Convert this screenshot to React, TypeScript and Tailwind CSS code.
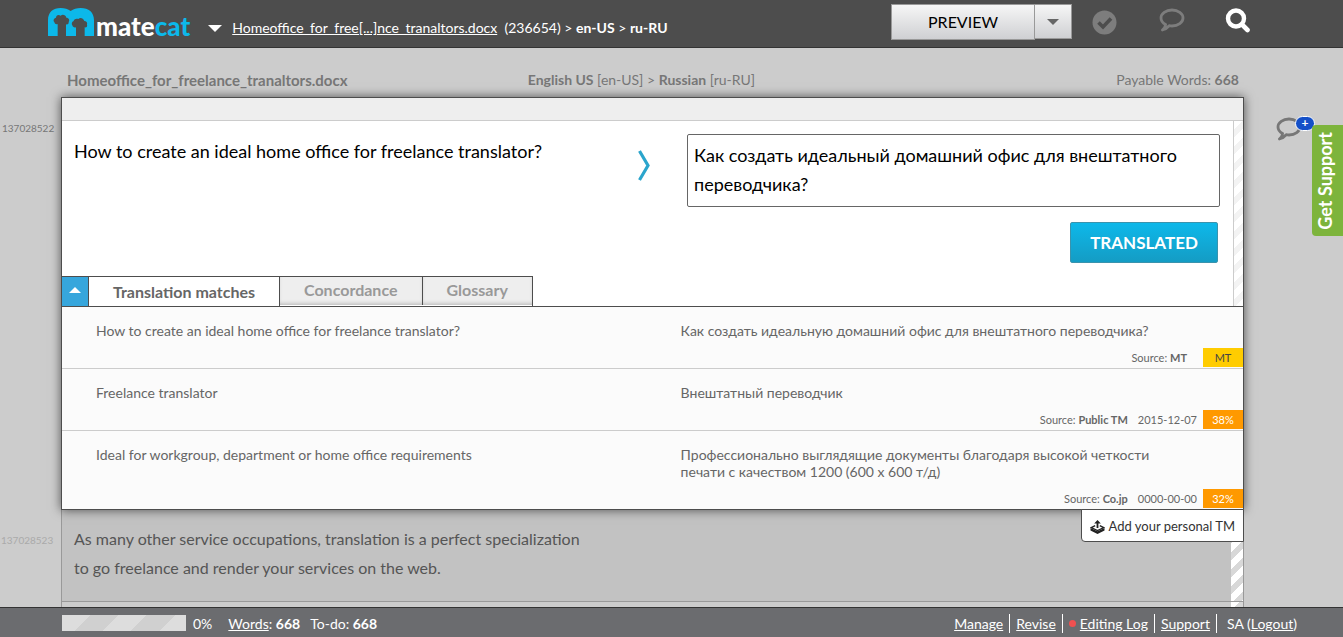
import React, { useState } from 'react'
import clsx from 'clsx'

interface Match {
  source: string
  target: string
  origin: string
  date?: string
  score: string
  machine?: boolean
}

const MATCHES: Match[] = [
  {
    source: 'How to create an ideal home office for freelance translator?',
    target: 'Как создать идеальную домашний офис для внештатного переводчика?',
    origin: 'MT',
    score: 'MT',
    machine: true,
  },
  {
    source: 'Freelance translator',
    target: 'Внештатный переводчик',
    origin: 'Public TM',
    date: '2015-12-07',
    score: '38%',
  },
  {
    source: 'Ideal for workgroup, department or home office requirements',
    target: 'Профессионально выглядящие документы благодаря высокой четкости печати с качеством 1200 (600 x 600 т/д)',
    origin: 'Co.jp',
    date: '0000-00-00',
    score: '32%',
  },
]

const TABS = ['Translation matches', 'Concordance', 'Glossary']

function Logo(): React.ReactElement {
  return (
    <a href="#" className="flex items-end gap-0.5">
      <svg width="46" height="28" viewBox="0 0 138 84" aria-hidden="true">
        <path
          fill="#0cb8ea"
          d="M0 84V36C0 13 15 0 38 0c12 0 22 3 30 9 8-6 18-9 30-9 24 0 40 13 40 36v48h-28V58c5 2 9-3 7-8 2-6-2-11-8-11-3-9-13-11-18-6-7-3-14 1-14 6-6 2-7 9-4 13 1 5 6 8 11 6v26H54V49c5 2 9-2 8-7 4-6 0-13-7-13-2-8-11-11-17-6-7-5-14-1-14 6-7 1-9 9-5 13 1 6 6 8 10 6v36z"
        />
      </svg>
      <span className="text-[26px] leading-5 font-black text-white">
        mate<span className="text-[#0cb8ea]">cat</span>
      </span>
    </a>
  )
}

function BubbleIcon({ className }: { className?: string }): React.ReactElement {
  return (
    <svg width="26" height="24" viewBox="0 0 26 24" fill="none" stroke="currentColor" strokeWidth="2.8" className={className} aria-hidden="true">
      <path d="M6.600 16.600C3.600 15 2 12.600 2 10 2 5.500 6.900 2 13 2s11 3.500 11 8-4.900 8-11 8c-1 0-1.900-.1-2.800-.3C8.500 19.600 6 21.500 3.400 22c1.800-1.500 3-3.400 3.200-5.400z" strokeLinejoin="round" />
    </svg>
  )
}

function Header(): React.ReactElement {
  return (
    <header className="h-12 shrink-0 bg-[#4d4d4d] border-b border-[#333] flex items-start pl-12 pr-[93px] text-white">
      <div className="flex items-start pt-2">
        <Logo />
        <button title="Projects" className="ml-[18px] mt-[17px] border-x-[7px] border-x-transparent border-t-[7px] border-t-white" />
        <div className="ml-2.5 mt-3 text-[14px] leading-4 whitespace-nowrap">
          <a href="#" className="underline">Homeoffice_for_free[...]nce_tranaltors.docx</a>
          <span>&nbsp; (236654) &gt; </span>
          <b>en-US</b> &gt; <b>ru-RU</b>
        </div>
      </div>
      <div className="ml-auto flex items-start pt-1">
        <button className="w-36 h-9 border border-[#999] bg-linear-to-b from-[#f6f6f6] to-[#cfd0d3] text-[16px] text-black">
          PREVIEW
        </button>
        <button title="More actions" className="w-[37px] h-[35px] border border-l-0 border-[#999] bg-linear-to-b from-[#f6f6f6] to-[#cfd0d3] flex items-center justify-center">
          <span className="border-x-[6px] border-x-transparent border-t-[6px] border-t-[#666]" />
        </button>
        <button title="Quality report" className="ml-5 mt-1.5">
          <svg width="25" height="25" viewBox="0 0 25 25" aria-hidden="true">
            <circle cx="12.500" cy="12.500" r="12" fill="#7d7d7d" />
            <path d="M6.500 12.500l4.500 4.500 8-8.500" fill="none" stroke="#4d4d4d" strokeWidth="3.600" />
          </svg>
        </button>
        <button title="Comments" className="ml-[42px] mt-1 text-[#7d7d7d]">
          <BubbleIcon />
        </button>
        <button title="Search" className="ml-10 mt-1">
          <svg width="25" height="25" viewBox="0 0 25 25" fill="none" stroke="white" aria-hidden="true">
            <circle cx="11" cy="10.500" r="8" strokeWidth="4.400" />
            <path d="M17 16.500l5.500 5.500" strokeWidth="4.600" strokeLinecap="round" />
          </svg>
        </button>
      </div>
    </header>
  )
}

function MatchRow({ match }: { match: Match }): React.ReactElement {
  return (
    <li className="border-b border-[#ccc] last:border-b-0 pt-[15px] pb-px text-[#666]">
      <div className="grid grid-cols-[11fr_10fr] text-[14px] leading-[17px]">
        <p className="pl-[34px]">{match.source}</p>
        <p className="pr-20">{match.target}</p>
      </div>
      <div className="mt-[9px] flex justify-end text-[11px] leading-[18px]">
        <span className="pt-px">Source: <b>{match.origin}</b></span>
        <span className={clsx('pt-px', match.date ? 'ml-2.5 mr-1.5' : 'mr-4')}>{match.date}</span>
        <span className={clsx('w-10 pt-px text-center', match.machine ? 'bg-[#fc0] text-[#444]' : 'bg-[#f90] text-white')}>
          {match.score}
        </span>
      </div>
    </li>
  )
}

function ActiveSegment(): React.ReactElement {
  const [tab, setTab] = useState(TABS[0])
  const [text, setText] = useState('Как создать идеальный домашний офис для внештатного переводчика?')

  return (
    <section className="relative z-10 border border-[#4d4d4d] bg-white shadow-[0_0_10px_rgba(0,0,0,0.6)]">
      <div className="h-[23px] bg-[#eee] border-b border-[#ccc]" />
      <div className="flex">
        <div className="flex-1">
          <div className="grid grid-cols-[539fr_86fr_546fr] h-[155px]">
            <p className="pl-3 pt-4 text-[18px] leading-[29px] text-black">
              How to create an ideal home office for freelance translator?
            </p>
            <div className="flex justify-center pt-[29px]">
              <svg width="14" height="31" viewBox="0 0 14 31" fill="none" stroke="#2ba5cc" strokeWidth="3.200" aria-hidden="true">
                <path d="M2.500 1L11 15.500 2.500 30" />
              </svg>
            </div>
            <div className="pt-[13px] pr-[13px] flex flex-col items-end">
              <textarea
                aria-label="Translation"
                value={text}
                onChange={(e) => setText(e.target.value)}
                className="w-full h-[73px] shrink-0 resize-none overflow-hidden rounded-xs border border-[#666] bg-white px-1.5 pt-1.5 text-[18px] leading-[29px] text-black outline-none"
              />
              <button className="mt-[15px] mr-0.5 w-37 h-[41px] shrink-0 rounded-xs border border-[#3a93ad] bg-linear-to-b from-[#0cb8ea] to-[#149cc4] text-[17px] font-bold text-white">
                TRANSLATED
              </button>
            </div>
          </div>
          <div className="flex h-[30px] w-max border-t border-r border-[#4d4d4d]">
            <button title="Collapse" className="w-[27px] border-r border-[#4d4d4d] bg-[#36a6dc] flex items-center justify-center pb-1">
              <span className="border-x-[6px] border-x-transparent border-b-[6px] border-b-white" />
            </button>
            {TABS.map((t) => (
              <button
                key={t}
                onClick={() => setTab(t)}
                className={clsx(
                  'px-6 border-r border-[#4d4d4d] last:border-r-0 text-[16px] font-bold',
                  tab === t ? 'bg-white text-[#666]' : 'mb-px bg-[#eee] pb-0.5 text-[#999] shadow-[inset_0_-3px_4px_-2px_rgba(0,0,0,0.25)]'
                )}
              >
                {t}
              </button>
            ))}
          </div>
        </div>
        <div className="w-2.5 border-l border-[#ccc] bg-[repeating-linear-gradient(135deg,#fff_0px,#fff_6px,#f3f3f3_6px,#f3f3f3_12px)]" />
      </div>
      <ul className="border-t border-[#4d4d4d] bg-[#fbfbfb]">
        {MATCHES.map((m) => (
          <MatchRow key={m.source} match={m} />
        ))}
      </ul>
      <button className="absolute top-full right-0 -mr-px flex h-[33px] items-center gap-1 rounded-bl-sm border border-[#4d4d4d] bg-white px-2 pt-0.5 text-[13px] whitespace-nowrap text-[#333]">
        <svg width="15" height="14" viewBox="0 0 15 14" aria-hidden="true">
          <path d="M7.500 0l3.300 3.600H8.400V8H6.600V3.600H4.200z" fill="#222" />
          <path d="M5.200 5.600L1.200 7.700l6.300 2.900 6.300-2.900-4-2.100" fill="none" stroke="#222" strokeWidth="1.300" />
          <path d="M.5 8l7 3.200 7-3.200v2.600L7.500 14 .5 10.600z" fill="#222" />
        </svg>
        Add your personal TM
      </button>
    </section>
  )
}

function Stripes(): React.ReactElement {
  return <div className="w-3 bg-[repeating-linear-gradient(135deg,#fff_0px,#fff_6px,#d8d8d8_6px,#d8d8d8_12px)]" />
}

function Footer(): React.ReactElement {
  return (
    <footer className="h-[30px] shrink-0 bg-[#6b6c6f] border-t border-[#333] flex items-center pl-[62px] pr-[46px] pt-0.5 text-[14px] leading-4 text-white whitespace-nowrap">
      <div
        role="progressbar"
        aria-label="Progress"
        aria-valuenow={0}
        className="w-31 h-4 mb-0.5 bg-[repeating-linear-gradient(135deg,#ddd_0px,#ddd_20px,#d0d0d0_20px,#d0d0d0_40px)]"
      />
      <span className="ml-[7px]">0%</span>
      <span className="ml-4"><a href="#" className="underline">Words</a>: <b>668</b></span>
      <span className="ml-2.5">To-do: <b>668</b></span>
      <nav className="ml-auto flex items-center">
        <a href="#" className="underline">Manage</a>
        <i className="mx-1.5 w-px h-[19px] bg-white" />
        <a href="#" className="underline">Revise</a>
        <i className="mx-1.5 w-px h-[19px] bg-white" />
        <i className="mr-1 size-[7px] rounded-full bg-[#f05050]" />
        <a href="#" className="underline">Editing Log</a>
        <i className="mx-1.5 w-px h-[19px] bg-white" />
        <a href="#" className="underline">Support</a>
        <i className="ml-1.5 mr-2.5 w-px h-[19px] bg-white" />
        <span>SA (<a href="#" className="underline">Logout</a>)</span>
      </nav>
    </footer>
  )
}

export default function App(): React.ReactElement {
  return (
    <div className="h-screen flex flex-col overflow-hidden bg-[#ccc] font-['Lato','Noto_Sans',sans-serif]">
      <Header />
      <main className="relative flex-1 min-h-0 overflow-hidden">
        <div className="h-[49px] ml-[67px] mr-[104px] grid grid-cols-[46fr_40fr_31fr] items-center pt-3.5 text-[14px] leading-4 text-[#777]">
          <b className="text-[15px]">Homeoffice_for_freelance_tranaltors.docx</b>
          <span><b>English US</b> [en-US] &gt; <b>Russian</b> [ru-RU]</span>
          <span className="text-right">Payable Words: <b>668</b></span>
        </div>
        <div className="grid grid-cols-[61px_1fr_99px]">
          <span className="pt-[23px] pl-0.5 text-[10px] leading-4 text-[#777]">137028522</span>
          <ActiveSegment />
          <div className="pt-5 pl-8">
            <button title="Add comment" className="relative text-[#777]">
              <BubbleIcon />
              <span className="absolute -top-px left-[19px] h-[15px] w-5 rounded-full border border-white bg-[#1450c8] text-[12px] leading-3 font-bold text-white">+</span>
            </button>
          </div>

          <span className="pt-[22px] pl-px text-[10px] leading-4 text-[#aaa]">137028523</span>
          <section className="flex border-x border-b border-[#999] bg-[#c2c2c2]">
            <p className="flex-1 pl-3 pt-3.5 pb-[19px] text-[16px] leading-[29px] text-[#555]">
              <span className="block max-w-[520px]">
                As many other service occupations, translation is a perfect specialization to go freelance and render your services on the web.
              </span>
            </p>
            <Stripes />
          </section>
          <span />
          <span />
          <section className="flex h-4 justify-end border-x border-[#999]">
            <Stripes />
          </section>
        </div>
        <button className="absolute right-0 top-[77px] flex h-[111px] w-[31px] items-center justify-center rounded-l bg-[#7db43c] pr-1 text-[18px] font-bold text-white">
          <span className="[writing-mode:vertical-rl] rotate-180 whitespace-nowrap">Get Support</span>
        </button>
      </main>
      <Footer />
    </div>
  )
}
